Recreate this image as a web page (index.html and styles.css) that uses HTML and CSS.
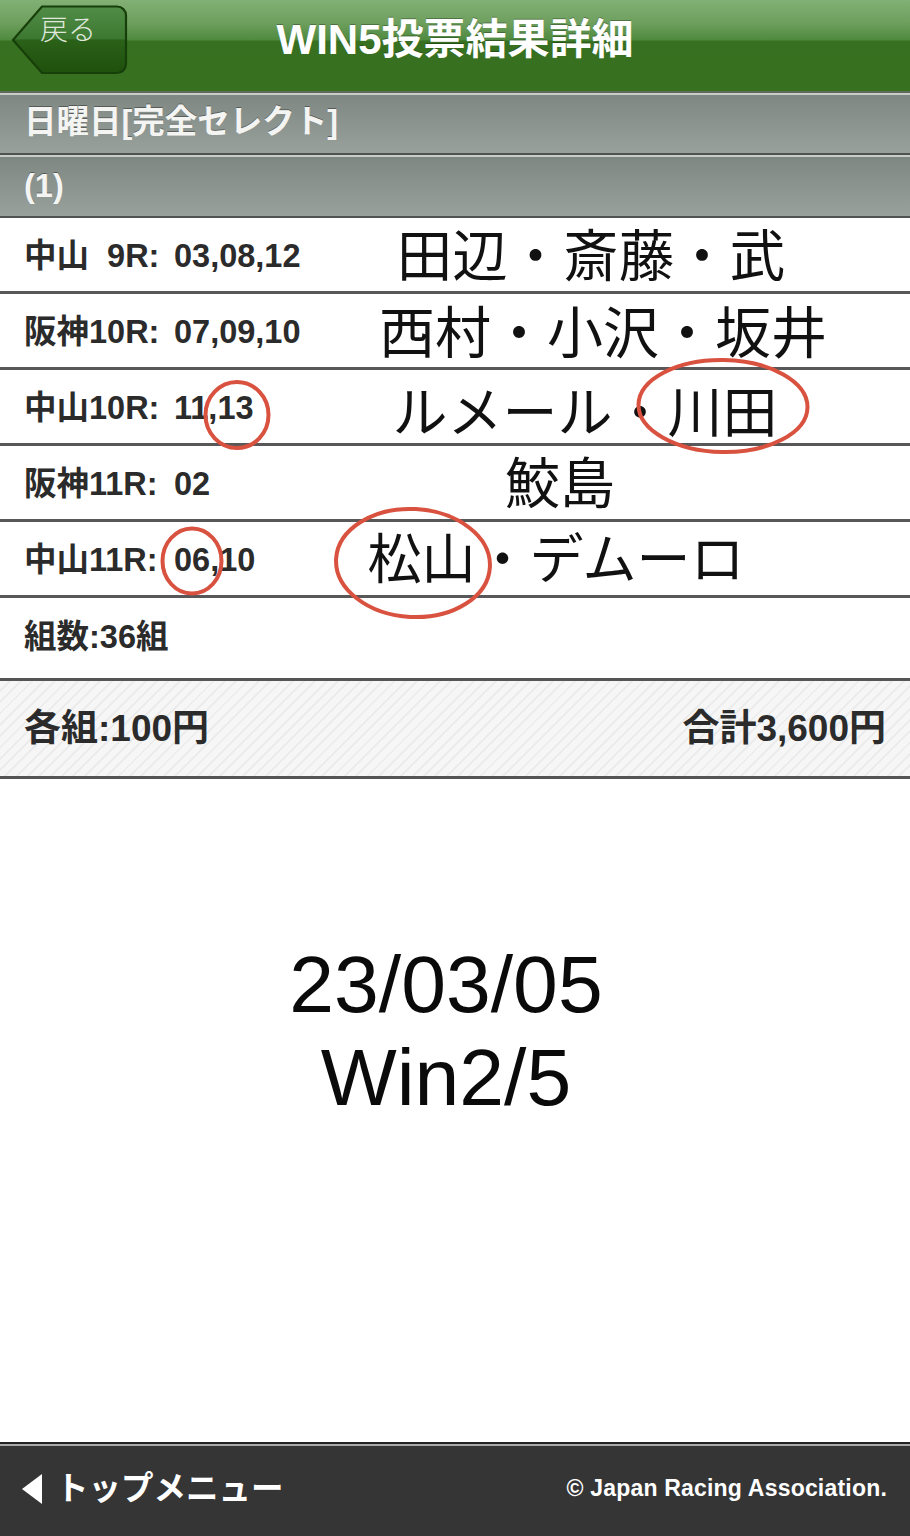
FILE: index.html
```html
<!DOCTYPE html>
<html lang="ja">
<head>
<meta charset="utf-8">
<title>WIN5投票結果詳細</title>
<link rel="stylesheet" href="styles.css">
</head>
<body>
<div class="page">
  <header class="topbar">
    <a class="back">
      <svg class="back-shape" viewBox="0 0 118 72" width="118" height="72" aria-hidden="true">
        <defs>
          <linearGradient id="bk" x1="0" y1="0" x2="0" y2="1">
            <stop offset="0" stop-color="#528d48"/>
            <stop offset="0.49" stop-color="#3d7831"/>
            <stop offset="0.5" stop-color="#2b6119"/>
            <stop offset="1" stop-color="#1f500d"/>
          </linearGradient>
        </defs>
        <path d="M31 2.5H106a9 9 0 0 1 9 9V60a9 9 0 0 1-9 9H31L2 36Z" fill="url(#bk)" stroke="#173f0a" stroke-width="2.2"/>
      </svg>
      <span class="back-label">戻る</span>
    </a>
    <h1 class="title">WIN5投票結果詳細</h1>
  </header>

  <div class="band band-first">日曜日[完全セレクト]</div>
  <div class="band band-second">(1)</div>

  <div class="rows">
    <div class="row"><span class="race">中山&nbsp;&nbsp;9R:</span><span class="nums">03,08,12</span><span class="note note-1">田辺・斎藤・武</span></div>
    <div class="row"><span class="race">阪神10R:</span><span class="nums">07,09,10</span><span class="note note-2">西村・小沢・坂井</span></div>
    <div class="row"><span class="race">中山10R:</span><span class="nums">11,13</span><span class="note note-3">ルメール・川田</span></div>
    <div class="row"><span class="race">阪神11R:</span><span class="nums">02</span><span class="note note-4">鮫島</span></div>
    <div class="row"><span class="race">中山11R:</span><span class="nums">06,10</span><span class="note note-5">松山・デムーロ</span></div>
    <div class="row row-total"><span class="race">組数:36組</span></div>
  </div>

  <div class="amount">
    <span class="amount-text">各組:100円</span>
    <span class="amount-text">合計3,600円</span>
  </div>

  <main class="memo">
    <div>23/03/05</div>
    <div>Win2/5</div>
  </main>

  <footer class="footer">
    <a class="top-link"><span class="tri"></span><span class="top-text">トップメニュー</span></a>
    <span class="copy">© Japan Racing Association.</span>
  </footer>

  <svg class="marks" viewBox="0 0 910 1536" width="910" height="1536" aria-hidden="true">
    <ellipse cx="237" cy="415" rx="31.5" ry="33"/>
    <ellipse cx="192" cy="561" rx="29.5" ry="32.5"/>
    <ellipse cx="723" cy="406" rx="84.5" ry="46" transform="rotate(1 723 406)"/>
    <ellipse cx="413" cy="563" rx="77" ry="54" transform="rotate(3 413 563)"/>
  </svg>
</div>
</body>
</html>
```
FILE: styles.css
```css
* { box-sizing: border-box; }
html, body { margin: 0; padding: 0; background: #fff; }
body { font-family: "Liberation Sans", "Noto Sans CJK JP", sans-serif; }
.page { position: relative; width: 910px; height: 1536px; display: flex; flex-direction: column; overflow: hidden; }

.topbar {
  height: 93px; flex: none; position: relative; display: flex; align-items: center; justify-content: center;
  background: linear-gradient(#82b075 0, #6fa05f 22px, #4f8a3f 40px, #377020 41px, #37701f 92px);
  border-bottom: 2px solid #5e6b58;
}
.back { position: absolute; left: 11px; top: 4px; width: 118px; height: 72px; }
.back-shape { display: block; }
.back-label { position: absolute; left: 29px; top: 4px; font-size: 28px; line-height: 40px; color: #dfe8da; font-family: "Noto Sans CJK JP", sans-serif; font-weight: 300; }
.title { margin: 0; font-size: 42px; line-height: 50px; font-weight: 700; color: #fff; position: relative; top: -6px; text-shadow: 0 -1px 0 rgba(0,0,0,.3); }

.band {
  flex: none; display: flex; align-items: center; padding-left: 24px; color: #f4f5f3; font-size: 32.5px; line-height: 40px; font-weight: 700;
  background: linear-gradient(#7f8783, #99a19d);
  border-top: 2px solid #c9cdca; border-bottom: 2px solid #4f5351;
  text-shadow: 0 -1px 0 rgba(0,0,0,.35);
}
.band-first { height: 62px; padding-bottom: 4px; }
.band-second { height: 63px; padding-bottom: 2px; }

.rows { flex: none; }
.row {
  height: 76px; display: flex; align-items: center; padding: 3px 0 0 24px; position: relative;
  font-size: 32.5px; line-height: 40px; font-weight: 700; color: #2b2b2b; border-bottom: 3px solid #585858;
}
.race { width: 150px; }
.nums { white-space: nowrap; }
.row-total { height: 80px; border-bottom: 0; padding: 0 0 2px 24px; }
.note {
  position: absolute; white-space: nowrap; font-family: "Noto Sans CJK JP", sans-serif; font-weight: 400;
  font-size: 55.5px; line-height: 70px; color: #111; transform: translateX(-50%);
}
.note-1 { left: 591px; top: -1px; }
.note-2 { left: 603px; top: 0; font-size: 56px; }
.note-3 { left: 585px; top: 3px; font-size: 55px; }
.note-4 { left: 560px; top: -2px; font-size: 55px; }
.note-5 { left: 556px; top: -1px; font-size: 54px; }

.amount {
  height: 101px; flex: none; display: flex; align-items: center; justify-content: space-between; padding: 0 24px;
  font-size: 37px; line-height: 44px; font-weight: 700; color: #2b2b2b;
  border-top: 3px solid #555; border-bottom: 3px solid #555;
  background: repeating-linear-gradient(135deg, #f6f6f6 0 6px, #ececec 6px 8px);
}

.memo {
  flex: 1; display: flex; flex-direction: column; align-items: center; padding-top: 159px; padding-right: 18px;
  font-size: 80.5px; line-height: 93px; color: #0a0a0a;
}

.footer {
  height: 94px; flex: none; display: flex; align-items: center; justify-content: space-between; padding: 0 23px 3px 22px;
  background: #353535; color: #fff; font-weight: 700;
  border-top: 2px solid #222; box-shadow: inset 0 2px 0 #a9a9a9;
}
.top-link { display: flex; align-items: center; font-size: 32.5px; line-height: 40px; }
.top-text { position: relative; left: -2px; }
.tri { width: 0; height: 0; border-style: solid; border-width: 15px 20px 15px 0; border-color: transparent #fff transparent transparent; margin-right: 16px; }
.copy { font-size: 23px; letter-spacing: .2px; }

.marks { position: absolute; left: 0; top: 0; pointer-events: none; }
.marks ellipse { fill: none; stroke: #d9513f; stroke-width: 4; }
```
